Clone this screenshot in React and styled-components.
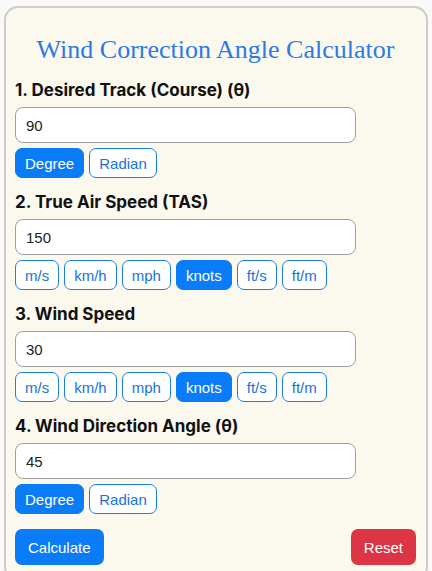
import { useState } from 'react'
import styled, { createGlobalStyle } from 'styled-components'

const speedUnits = ['m/s', 'km/h', 'mph', 'knots', 'ft/s', 'ft/m']
const angleUnits = ['Degree', 'Radian']

const fields = [
   { key: 'track', label: '1. Desired Track (Course) (θ)', value: '90', units: angleUnits, unit: 'Degree' },
   { key: 'tas', label: '2. True Air Speed (TAS)', value: '150', units: speedUnits, unit: 'knots' },
   { key: 'wind', label: '3. Wind Speed', value: '30', units: speedUnits, unit: 'knots' },
   { key: 'dir', label: '4. Wind Direction Angle (θ)', value: '45', units: angleUnits, unit: 'Degree' },
]

const App = () => {
   const [state, setState] = useState(() =>
      Object.fromEntries(fields.map((f) => [f.key, { value: f.value, unit: f.unit }]))
   )

   const update = (key, patch) =>
      setState((s) => ({ ...s, [key]: { ...s[key], ...patch } }))

   return (
      <>
         <GlobalStyle />
         <Card>
            <Title>Wind Correction Angle Calculator</Title>
            {fields.map((f) => (
               <Section key={f.key}>
                  <Label>{f.label}</Label>
                  <Input
                     type='text'
                     value={state[f.key].value}
                     onChange={(e) => update(f.key, { value: e.target.value })}
                  />
                  <UnitRow>
                     {f.units.map((u) => (
                        <UnitButton
                           key={u}
                           $active={state[f.key].unit === u}
                           onClick={() => update(f.key, { unit: u })}
                        >
                           {u}
                        </UnitButton>
                     ))}
                  </UnitRow>
               </Section>
            ))}
            <Actions>
               <ActionButton>Calculate</ActionButton>
               <ActionButton $danger>Reset</ActionButton>
            </Actions>
         </Card>
      </>
   )
}

export default App

const GlobalStyle = createGlobalStyle`
   body {
      margin: 0;
      background: #f9f9f9;
      font-family: 'Liberation Sans', Arial, sans-serif;
   }
`

const Card = styled.div`
   box-sizing: border-box;
   width: 424px;
   margin: 6px 0 0 4px;
   padding: 25px 10px 14px 9px;
   background: #fbf8ee;
   border: 2px solid #cdcdcd;
   border-radius: 14px;
`

const Title = styled.h1`
   margin: 0 0 13px;
   text-align: center;
   font-family: 'Liberation Serif', serif;
   font-weight: 400;
   font-size: 26px;
   line-height: 34px;
   color: #2a7be4;
`

const Section = styled.div`
   display: flex;
   flex-direction: column;
   align-items: flex-start;
   margin-bottom: 14px;
`

const Label = styled.label`
   font-family: Inter, 'Noto Sans', sans-serif;
   font-weight: 700;
   font-size: 17px;
   line-height: 20px;
   color: #111;
   margin-bottom: 7px;
`

const Input = styled.input`
   box-sizing: border-box;
   width: 341px;
   height: 36px;
   padding: 0 10px;
   border: 1px solid #a0a0a0;
   border-radius: 8px;
   background: #fff;
   font-family: 'Liberation Sans', Arial, sans-serif;
   font-size: 15px;
   color: #222;
   margin-bottom: 5px;
   outline: none;
`

const UnitRow = styled.div`
   display: flex;
   gap: 5px;
`

const UnitButton = styled.button`
   height: 30px;
   padding: 0 9px;
   border: 1px solid #1a7ee8;
   border-radius: 7px;
   background: ${(p) => (p.$active ? '#0a7cf8' : '#fff')};
   color: ${(p) => (p.$active ? '#fff' : '#1a72d8')};
   border-color: ${(p) => (p.$active ? '#0a7cf8' : '#1a7ee8')};
   font-family: 'Liberation Sans', Arial, sans-serif;
   font-size: 15px;
   cursor: pointer;
`

const Actions = styled.div`
   display: flex;
   justify-content: space-between;
   padding-top: 1px;
`

const ActionButton = styled.button`
   height: 36px;
   padding: 0 13px;
   border: none;
   border-radius: 7px;
   background: ${(p) => (p.$danger ? '#dc3545' : '#0a7cf8')};
   color: #fff;
   font-family: 'Liberation Sans', Arial, sans-serif;
   font-size: 15px;
   cursor: pointer;
`
